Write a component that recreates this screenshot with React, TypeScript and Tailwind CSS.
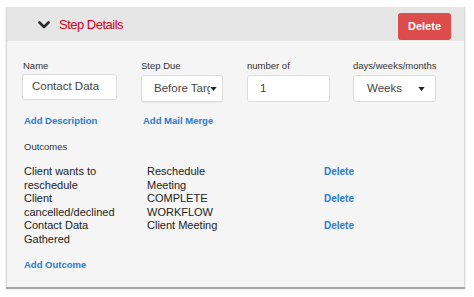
import React from "react";

const Caret = () => (
  <svg width="7" height="4" viewBox="0 0 8 5" className="shrink-0">
    <path d="M0 0 L8 0 L4 5 Z" fill="#222" />
  </svg>
);

export default function App() {
  return (
    <div
      className="w-[474px] h-[297px] bg-white pt-[7px] pl-[6px]"
      style={{ fontFamily: '"Liberation Sans", Arial, sans-serif' }}
    >
      <div className="w-[459px] h-[280px] bg-[#f5f5f5] border-l border-r border-[#d8d8d8] shadow-[0_2px_1px_rgba(0,0,0,0.35)] flex flex-col">
        <div className="h-[34px] shrink-0 bg-[#e6e6e6] flex items-center pl-[31px] pr-[13px]">
          <svg width="12" height="8" viewBox="0 0 12 8" className="mr-[9px] mt-[1px]">
            <path d="M1.5 1.5 L6 6 L10.5 1.5" stroke="#2a2a2a" strokeWidth="2.6" fill="none" strokeLinecap="round" strokeLinejoin="round" />
          </svg>
          <span className="text-[13px] tracking-[-0.5px] text-[#d0021b] mt-[1px]">Step Details</span>
          <div className="flex-1" />
          <button className="w-[53px] h-[27px] bg-[#dc4c4a] rounded-[3px] text-white text-[11px] font-bold mt-[5px]">
            Delete
          </button>
        </div>

        <div className="pl-[15px] pt-[18px] flex flex-col">
          <div className="flex">
            <div className="w-[119px] flex flex-col">
              <span className="text-[9.5px] text-[#333] leading-[13px] pl-[1px]">Name</span>
              <div className="mt-[2px] w-[95px] h-[26px] bg-white border border-[#ddd] rounded-[3px] flex items-center pl-[9px] text-[11.5px] text-[#444]">
                Contact Data
              </div>
            </div>
            <div className="w-[106px] flex flex-col">
              <span className="text-[9.5px] text-[#333] leading-[13px]">Step Due</span>
              <div className="mt-[3px] w-[82px] h-[27px] bg-white border border-[#ddd] rounded-[3px] flex items-center pl-[12px] pr-[5px] text-[11.5px] text-[#444] shadow-[0_1px_1px_rgba(0,0,0,0.05)]">
                <span className="overflow-hidden whitespace-nowrap w-[59px]">Before Target</span>
                <div className="flex-1" />
                <Caret />
              </div>
            </div>
            <div className="w-[106px] flex flex-col">
              <span className="text-[9.5px] text-[#333] leading-[13px]">number of</span>
              <div className="mt-[3px] w-[83px] h-[27px] bg-white border border-[#ddd] rounded-[3px] flex items-center pl-[12px] text-[11.5px] text-[#444]">
                1
              </div>
            </div>
            <div className="flex flex-col">
              <span className="text-[9.5px] text-[#333] leading-[13px]">days/weeks/months</span>
              <div className="mt-[3px] w-[83px] h-[27px] bg-white border border-[#ddd] rounded-[3px] flex items-center pl-[13px] pr-[10px] text-[11.5px] text-[#444]">
                <span>Weeks</span>
                <div className="flex-1" />
                <Caret />
              </div>
            </div>
          </div>

          <div className="flex mt-[12px] text-[9.5px] font-bold text-[#2a7bd0] leading-[13px]">
            <span className="w-[121px] pl-[2px]">Add Description</span>
            <span>Add Mail Merge</span>
          </div>

          <div className="mt-[13px] text-[9.5px] text-[#333] leading-[13px] pl-[2px]">Outcomes</div>

          <div className="mt-[12px] pl-[2px] flex flex-col text-[11px] text-[#222] leading-[13.6px]">
            {[
              ["Client wants to reschedule", "Reschedule Meeting"],
              ["Client cancelled/declined", "COMPLETE WORKFLOW"],
              ["Contact Data Gathered", "Client Meeting"],
            ].map(([a, b], i) => (
              <div key={i} className="flex">
                <div className="w-[123px]">
                  <div className="w-[97px]">{a}</div>
                </div>
                <div className="w-[177px]">
                  <div className="w-[85px]">{b}</div>
                </div>
                <div className="text-[10px] font-bold text-[#2a7bd0]">Delete</div>
              </div>
            ))}
          </div>

          <div className="mt-[11px] pl-[2px] text-[9.5px] font-bold text-[#2a7bd0] leading-[13px]">Add Outcome</div>
        </div>
      </div>
    </div>
  );
}
